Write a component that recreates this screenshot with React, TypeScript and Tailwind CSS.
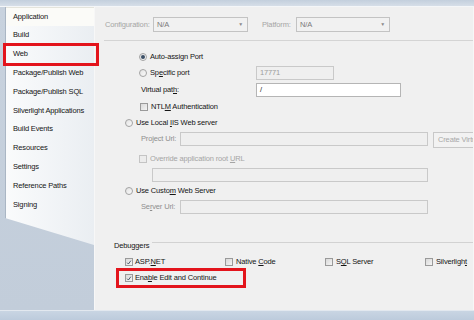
import type { ReactNode } from "react";

const navItems = [
  "Application",
  "Build",
  "Web",
  "Package/Publish Web",
  "Package/Publish SQL",
  "Silverlight Applications",
  "Build Events",
  "Resources",
  "Settings",
  "Reference Paths",
  "Signing",
];

function Radio({ checked = false }: { checked?: boolean }) {
  return (
    <span className="w-[8px] h-[8px] rounded-full border border-[#a3a3a3] bg-gradient-to-br from-[#e2e2e2] to-[#fbfbfb] flex items-center justify-center shrink-0">
      {checked && <span className="w-[4px] h-[4px] rounded-full bg-[#3b4f66]" />}
    </span>
  );
}

function Check({ checked = false, dim = false }: { checked?: boolean; dim?: boolean }) {
  return (
    <span
      className={`w-[8px] h-[8px] border flex items-center justify-center shrink-0 ${
        dim ? "border-[#c4c4c4] bg-[#ececec]" : "border-[#9a9a9a] bg-gradient-to-br from-[#d9d9d9] to-[#f4f4f4]"
      }`}
    >
      {checked && (
        <svg viewBox="0 0 8 8" className="w-[7px] h-[7px]">
          <path d="M1.5 4.2 L3.2 6 L6.5 1.5" fill="none" stroke="#2f3f55" strokeWidth="1.1" />
        </svg>
      )}
    </span>
  );
}

function Box({ w, white = false, children }: { w: string; white?: boolean; children?: ReactNode }) {
  return (
    <div
      className={`${w} h-[14px] border flex items-center px-[3px] shrink-0 ${
        white ? "border-[#b5b5b5] bg-white text-[#222]" : "border-[#c9c9c9] bg-[#efefef] text-[#9d9d9d]"
      }`}
    >
      {children}
    </div>
  );
}

function Combo({ w }: { w: string }) {
  return (
    <div className={`${w} h-[15px] border border-[#c3c3c3] bg-[#f1f1f1] flex items-center justify-between pl-[3px] pr-[4px] text-[#7a7a7a] shrink-0`}>
      <span>N/A</span>
      <span className="text-[5px] text-[#8a8a8a]">▼</span>
    </div>
  );
}

export default function App() {
  return (
    <div className="relative w-[474px] h-[320px] overflow-hidden bg-[#c7d2df] font-['Liberation_Sans',sans-serif] text-[7.5px] tracking-[-0.15px] text-[#151515] leading-none whitespace-nowrap">
      <div className="h-[7px] bg-gradient-to-b from-[#c3cfdd] to-[#d6dee8] border-b border-[#f4f6f8]" />
      <div className="flex h-[303px]">
        {/* side tabs */}
        <div className="w-[94px] pl-[5px] bg-gradient-to-b from-[#c8d2de] to-[#c2cdda]">
          <div className="h-full border-l border-[#aab6c4] bg-gradient-to-r from-[#fafbfc] to-[#eaeef2] [clip-path:polygon(0_0,100%_0,100%_238px,0_211px)]">
            {navItems.map((item, i) => (
              <div
                key={item}
                className={`h-[18.8px] flex items-center pl-[7px] ${i === 0 ? "bg-[#fbfbf8] border-t border-[#e4e4dc]" : ""}`}
              >
                {item}
              </div>
            ))}
          </div>
        </div>

        {/* main page */}
        <div className="flex-1 bg-[#f0f0f0] border-l border-[#f7f7f7] border-r border-[#e4e4e4] overflow-hidden">
          <div className="pt-[10px] flex items-center h-[25px]">
            <span className="ml-[10px] w-[48px] text-[#a5a5a5]">Configuration:</span>
            <Combo w="w-[95px]" />
            <span className="ml-[14px] w-[34px] text-[#a5a5a5]">Platform:</span>
            <Combo w="w-[94px]" />
          </div>
          <div className="mt-[8px] ml-[9px] border-t border-[#d4d4d4]" />

          <div className="mt-[8px] h-[16px] flex items-center pl-[44px] gap-[3px]">
            <Radio checked />
            <span>Auto-assign Port</span>
          </div>
          <div className="h-[16px] flex items-center pl-[44px]">
            <div className="w-[117px] flex items-center gap-[3px] shrink-0">
              <Radio />
              <span>
                Sp<u>e</u>cific port
              </span>
            </div>
            <Box w="w-[78px]">17771</Box>
          </div>
          <div className="mt-[1px] h-[16px] flex items-center pl-[46px]">
            <span className="w-[115px] shrink-0">
              Virtual pat<u>h</u>:
            </span>
            <Box w="w-[145px]" white>
              /
            </Box>
          </div>
          <div className="mt-[1px] h-[16px] flex items-center pl-[45px] gap-[3px]">
            <Check />
            <span>
              NTL<u>M</u> Authentication
            </span>
          </div>
          <div className="h-[16px] flex items-center pl-[30px] gap-[3px]">
            <Radio />
            <span>
              Use Local <u>I</u>IS Web server
            </span>
          </div>
          <div className="h-[16px] flex items-center pl-[46px]">
            <span className="w-[39px] shrink-0 text-[#8f8f8f]">Project Url:</span>
            <Box w="w-[248px]" />
            <div className="ml-[5px] mt-[2px] w-[80px] h-[16px] shrink-0 border border-[#c8c8c8] bg-[#f2f2f2] flex items-center pl-[4px] text-[#a8a8a8] overflow-hidden">
              Create Virtual Directory
            </div>
          </div>
          <div className="mt-[4px] h-[16px] flex items-center pl-[44px] gap-[3px] text-[#a5a5a5]">
            <Check dim />
            <span>
              Override application root <u>U</u>RL
            </span>
          </div>
          <div className="h-[16px] flex items-center pl-[57px]">
            <Box w="w-[276px]" />
          </div>
          <div className="h-[16px] flex items-center pl-[30px] gap-[3px]">
            <Radio />
            <span>
              Use Custo<u>m</u> Web Server
            </span>
          </div>
          <div className="h-[16px] flex items-center pl-[46px]">
            <span className="w-[39px] shrink-0 text-[#8f8f8f]">
              Se<u>r</u>ver Url:
            </span>
            <Box w="w-[248px]" />
          </div>

          <div className="mt-[22px] h-[17px] flex items-center pl-[19px]">
            <span>Debuggers</span>
            <div className="flex-1 ml-[3px] -translate-y-[3px] border-t border-[#d2d2d2]" />
          </div>
          <div className="h-[16px] flex items-center pl-[30px]">
            <div className="w-[100px] shrink-0 flex items-center gap-[2px]">
              <Check checked />
              <span>
                ASP.<u>N</u>ET
              </span>
            </div>
            <div className="w-[100px] shrink-0 flex items-center gap-[3px]">
              <Check />
              <span>
                Native <u>C</u>ode
              </span>
            </div>
            <div className="w-[100px] shrink-0 flex items-center gap-[3px]">
              <Check />
              <span>
                S<u>Q</u>L Server
              </span>
            </div>
            <div className="flex items-center gap-[3px]">
              <Check />
              <span>
                Silverligh<u>t</u>
              </span>
            </div>
          </div>
          <div className="h-[16px] flex items-center pl-[30px] gap-[2px]">
            <Check checked />
            <span>
              Ena<u>b</u>le Edit and Continue
            </span>
          </div>
        </div>
      </div>
      <div className="h-[10px] border-t border-[#e2e8ef] bg-gradient-to-b from-[#c9d5e3] to-[#bccbdc]" />

      {/* red annotation boxes */}
      <div className="absolute left-[3px] top-[43px] w-[96px] h-[23px] border-[3px] border-[#e3141c]" />
      <div className="absolute left-[116px] top-[268px] w-[130px] h-[20px] border-[3px] border-[#e3141c]" />
    </div>
  );
}
